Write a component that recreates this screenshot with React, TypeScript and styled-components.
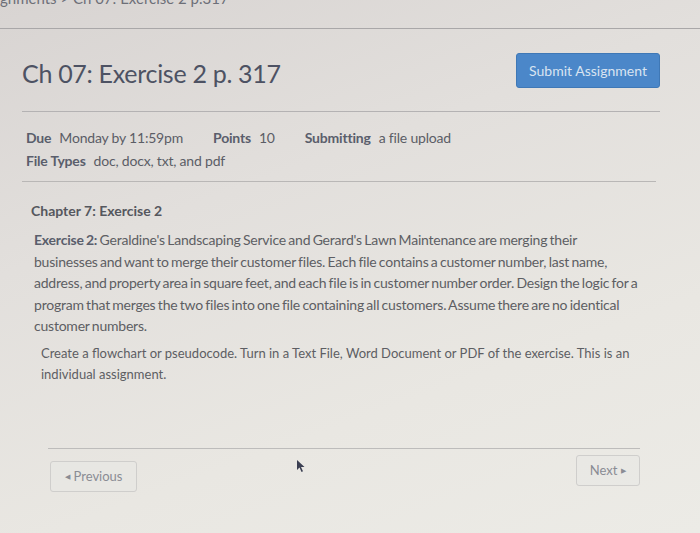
import React from 'react';
import styled, { createGlobalStyle } from 'styled-components';

const Global = createGlobalStyle`
  html, body {
    margin: 0;
    padding: 0;
  }
  body {
    font-family: Lato, "Open Sans", sans-serif;
    background: #dedad7;
  }
`

const Page = styled.div`
  width: 700px;
  height: 533px;
  overflow: hidden;
  background: linear-gradient(160deg, #d8d4d2 0%, #e2dfdc 35%, #e9e7e2 70%, #ecebe6 100%);
  position: relative;
`
const Crumbs = styled.div`
  height: 28px;
  border-bottom: 1px solid #a9a7a8;
  font-size: 15px;
  color: #6d6f78;
  line-height: 0;
  white-space: nowrap;
  overflow: hidden;
`
const Crumb = styled.span`
  position: relative;
  top: -2px;
`
const Main = styled.div`
  padding: 0 40px 0 22px;
`
const Header = styled.div`
  display: flex;
  align-items: center;
  justify-content: space-between;
  padding: 24px 0 23px;
  border-bottom: 1px solid #b4b2b3;
`
const Title = styled.h1`
  margin: 5px 0 0;
  font-size: 25px;
  font-weight: 400;
  color: #4d5263;
  letter-spacing: -0.3px;
`
const SubmitButton = styled.button`
  font-family: inherit;
  font-size: 14px;
  color: #d9e4f1;
  background: #4b87c9;
  border: 1px solid #3f78b6;
  border-radius: 3px;
  height: 35px;
  width: 144px;
  white-space: nowrap;
  padding: 0;
`
const Details = styled.div`
  padding: 14px 0 9px 4px;
  border-bottom: 1px solid #b9b7b6;
  margin-right: 4px;
`
const MetaRow = styled.div`
  display: flex;
  gap: 30px;
  font-size: 14px;
  line-height: 23px;
  color: #5b5d66;
  letter-spacing: -0.2px;
`
const Meta = styled.div`
  display: flex;
  gap: 8px;
`
const Label = styled.span`
  font-weight: 700;
  color: #5a5e6c;
`
const Description = styled.div`
  padding: 20px 0 0 9px;
  color: #5d5e63;
  font-size: 14px;
`
const Heading = styled.div`
  font-weight: 700;
  font-size: 14px;
  color: #55575e;
  margin-bottom: 10px;
`
const Para = styled.p<{ $indent?: number; $size?: number }>`
  margin: 0 0 6px;
  padding-left: ${p => p.$indent ?? 0}px;
  font-size: ${p => p.$size ?? 14}px;
  letter-spacing: ${p => (p.$size ?? 14) === 14 ? -0.22 : 0}px;
  word-spacing: ${p => (p.$size ?? 14) === 14 ? -1 : 0}px;
  line-height: 21.5px;
  max-width: 606px;
`
const Footer = styled.div`
  margin: 62px 60px 0 48px;
  border-top: 1px solid #bdbcbb;
  display: flex;
  justify-content: space-between;
  align-items: flex-start;
  padding: 0 0 0 2px;
`
const NavButton = styled.button<{ $top: number; $width: number }>`
  font-family: inherit;
  font-size: 13px;
  color: #8a8c94;
  background: rgba(232, 231, 228, 0.6);
  border: 1px solid #cfcecc;
  border-radius: 3px;
  height: 31px;
  width: ${p => p.$width}px;
  padding: 0;
  display: flex;
  align-items: center;
  justify-content: center;
  gap: 4px;
  margin-top: ${p => p.$top}px;
`
const Caret = styled.span`
  font-size: 7px;
  color: #8a8c94;
`
const Pointer = styled.svg`
  position: absolute;
  left: 296px;
  top: 459px;
`

export default function App() {
  return (
    <Page>
      <Global />
      <Crumbs><Crumb>gnments &gt; Ch 07: Exercise 2 p.317</Crumb></Crumbs>
      <Main>
        <Header>
          <Title>Ch 07: Exercise 2 p. 317</Title>
          <SubmitButton>Submit Assignment</SubmitButton>
        </Header>
        <Details>
          <MetaRow>
            <Meta><Label>Due</Label><span>Monday by 11:59pm</span></Meta>
            <Meta><Label>Points</Label><span>10</span></Meta>
            <Meta><Label>Submitting</Label><span>a file upload</span></Meta>
          </MetaRow>
          <MetaRow>
            <Meta><Label>File Types</Label><span>doc, docx, txt, and pdf</span></Meta>
          </MetaRow>
        </Details>
        <Description>
          <Heading>Chapter 7: Exercise 2</Heading>
          <Para $indent={3}>
            <Label>Exercise 2:</Label> Geraldine's Landscaping Service and Gerard's Lawn Maintenance are merging their businesses and want to merge their customer files.  Each file contains a customer number, last name, address, and property area in square feet, and each file is in customer number order. Design the logic for a program that merges the two files into one file containing all customers. Assume there are no identical customer numbers.
          </Para>
          <Para $indent={10} $size={13}>
            Create a flowchart or pseudocode. Turn in a Text File, Word Document or PDF of the exercise. This is an individual assignment.
          </Para>
        </Description>
      </Main>
      <Footer>
        <NavButton $top={12} $width={87}><Caret>◀</Caret>Previous</NavButton>
        <NavButton $top={6} $width={64}>Next<Caret>▶</Caret></NavButton>
      </Footer>
      <Pointer width="10" height="14" viewBox="0 0 10 14">
        <path d="M1 1 L1 11 L3.5 8.5 L5.5 13 L7 12.3 L5 8 L8.5 8 Z" fill="#3b3f52" />
      </Pointer>
    </Page>
  );
}
